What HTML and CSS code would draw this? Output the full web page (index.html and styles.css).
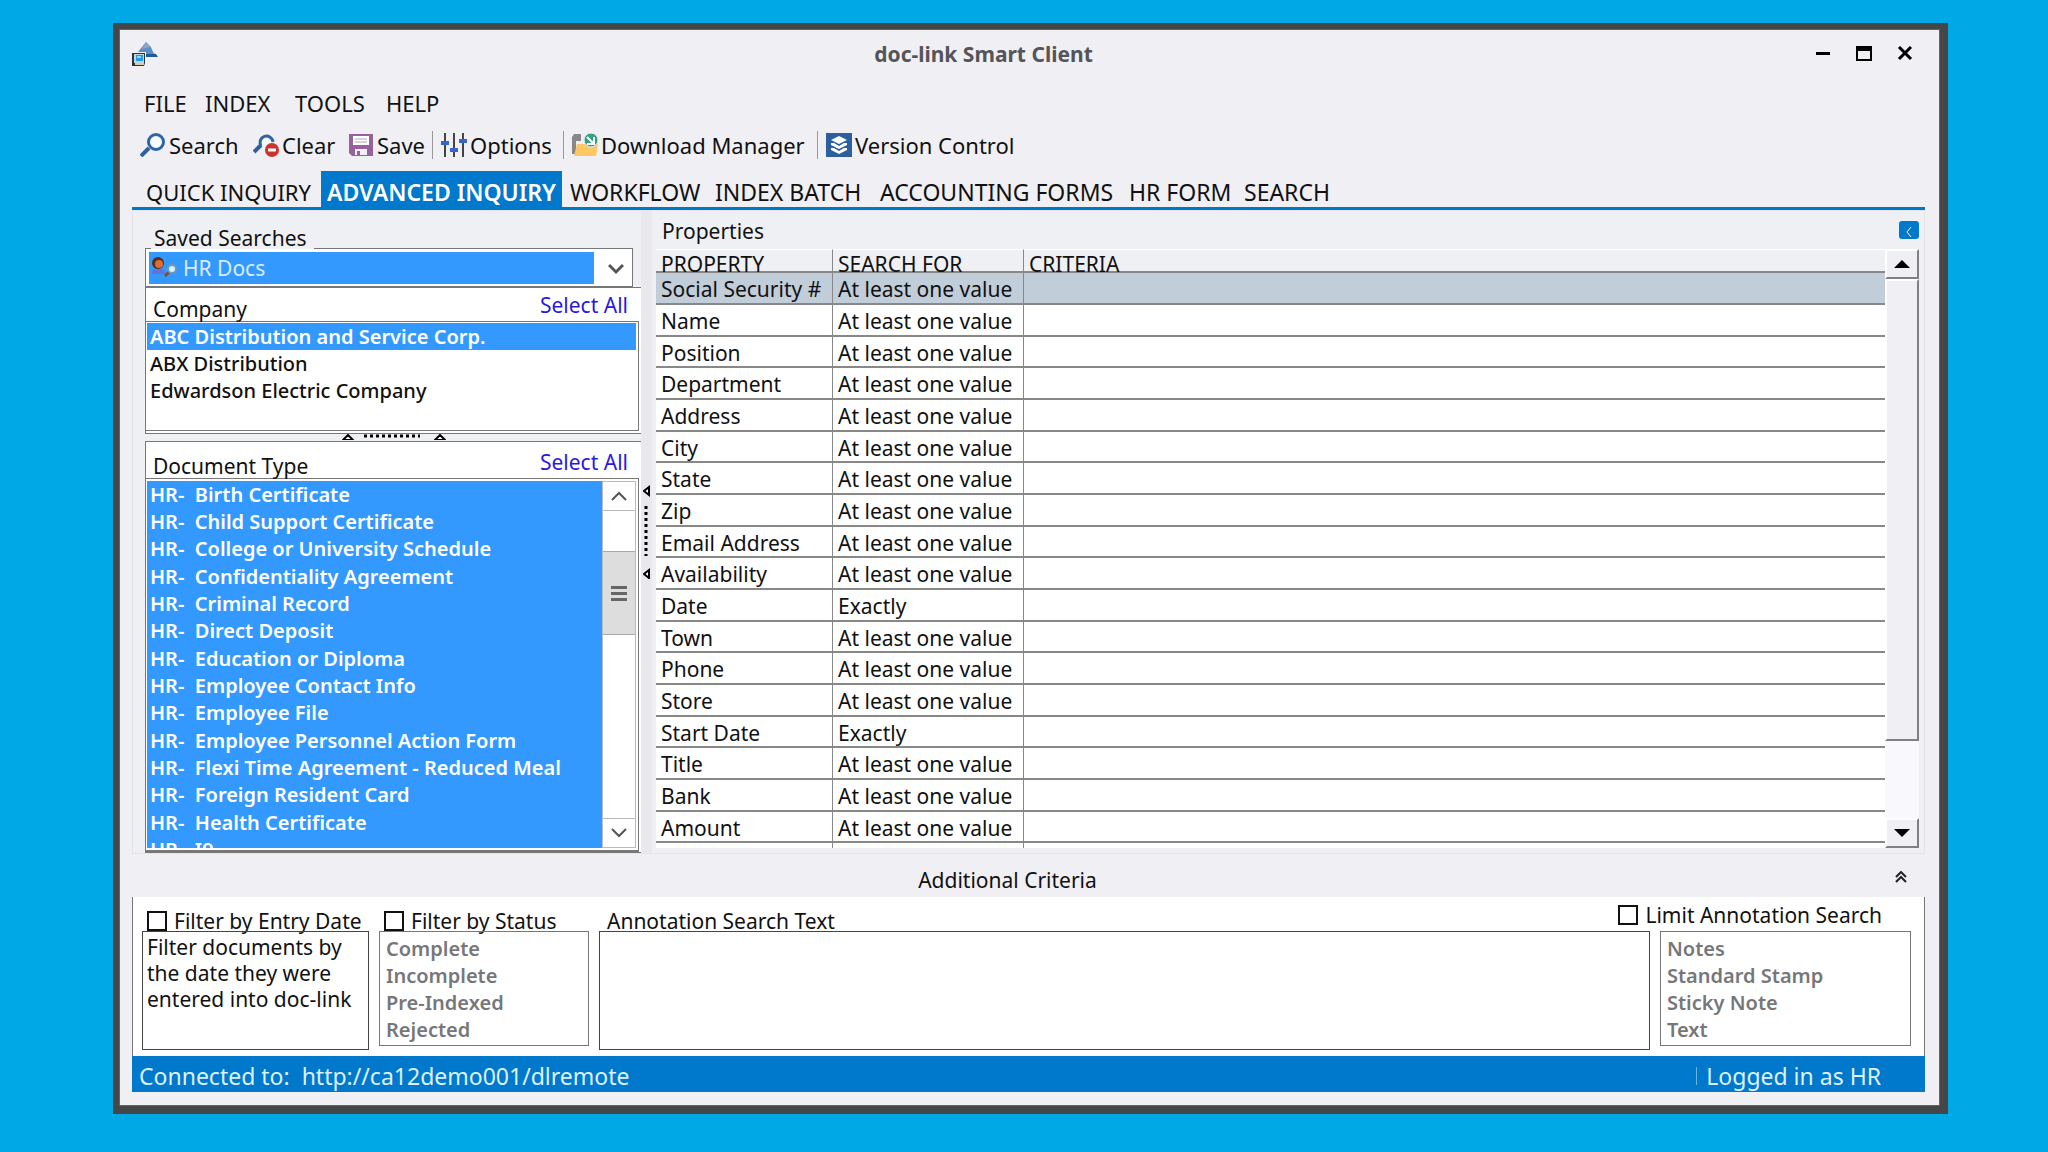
FILE: index.html
```html
<!DOCTYPE html>
<html lang="en">
<head>
<meta charset="utf-8">
<title>doc-link Smart Client</title>
<link rel="stylesheet" href="styles.css">
</head>
<body>
<div class="window">
  <header class="titlebar">
    <svg class="logo" viewBox="0 0 26 26" aria-hidden="true">
      <path d="M14 1L19 6L21 11L25 15H14V11H6L10 6Z" fill="#5f8fc4"/>
      <path d="M14 1L18 6L10 8Z" fill="#8da6c6"/>
      <path d="M14 13H24L26 16H14Z" fill="#1d5c97"/>
      <path d="M0 12H13V22L12 25H0Z" fill="#30343a"/>
      <rect x="2" y="13" width="10" height="9" fill="#c5d3dc"/>
      <rect x="4" y="14" width="7" height="6" fill="#1f9bea"/>
      <rect x="5" y="15" width="4" height="2" fill="#8fdcff"/>
      <rect x="3" y="22" width="9" height="2" fill="#d8cda0"/>
    </svg>
    <h1 class="title">doc-link Smart Client</h1>
    <div class="controls">
      <button aria-label="Minimize"><svg viewBox="0 0 16 16"><path d="M1 7.500H15" stroke="#000" stroke-width="3"/></svg></button>
      <button aria-label="Maximize"><svg viewBox="0 0 16 16"><path d="M1 1H15V14H1Z" fill="none" stroke="#000" stroke-width="2"/><path d="M0 0H16V5H0Z"/></svg></button>
      <button aria-label="Close"><svg viewBox="0 0 16 16"><path d="M2 1L14 13M14 1L2 13" stroke="#000" stroke-width="3"/></svg></button>
    </div>
  </header>

  <nav class="menu">
    <button class="m-file">FILE</button><button class="m-index">INDEX</button><button class="m-tools">TOOLS</button><button>HELP</button>
  </nav>

  <div class="toolbar">
    <button class="tool t-search"><svg viewBox="0 0 26 24"><path d="M1 23L9 15" stroke="#2e5f9f" stroke-width="4"/><circle cx="16" cy="9" r="7.500" fill="#f8fbfe" stroke="#2e63a6" stroke-width="3"/></svg>Search</button>
    <button class="tool t-clear"><svg viewBox="0 0 26 24"><path d="M1 19L8 12" stroke="#2e5f9f" stroke-width="4"/><path d="M8 13A6.500 6.500 0 1 1 20 9" fill="#f8fbfe" stroke="#2e63a6" stroke-width="3"/><circle cx="19" cy="17" r="7" fill="#c9352d"/><path d="M15 17H23" stroke="#fff" stroke-width="3"/></svg>Clear</button>
    <button class="tool t-save"><svg viewBox="0 0 26 24"><path d="M1 1H25V23H4L1 20Z" fill="#95639a"/><path d="M5 3H21V12H5Z" fill="#fff"/><path d="M7 6H19M7 9H19" stroke="#aaa"/><path d="M7 16H19V22H7Z" fill="#f3edf4"/><path d="M9 18H12V22H9Z" fill="#95639a"/></svg>Save</button>
    <span class="sep"></span>
    <button class="tool t-options"><svg viewBox="0 0 26 24"><path d="M4 0V24M13 0V24M22 0V24" stroke="#444" stroke-width="2"/><path d="M0 8H8V12H0ZM9 15H17V19H9ZM18 6H26V10H18Z" fill="#3764cf"/></svg>Options</button>
    <span class="sep"></span>
    <button class="tool t-download"><svg viewBox="0 0 26 24"><path d="M0 21V4L2 1H9V8H4V21Z" fill="#888"/><path d="M5 11H26L24 23H2Z" fill="#fdc863"/><circle cx="19" cy="7" r="7" fill="#35a07c" stroke="#eef" /><path d="M15 4L21 10M22 4V11H15" fill="none" stroke="#fff" stroke-width="2"/></svg>Download Manager</button>
    <span class="sep"></span>
    <button class="tool"><svg viewBox="0 0 26 24"><path d="M0 0H26V24H0Z" fill="#2c5f9e"/><path d="M13 3L21 7L13 11L5 7Z" fill="#fff"/><path d="M5 10L8 10L13 13L18 10L21 10V12L13 16L5 12ZM5 15L8 15L13 18L18 15L21 15V17L13 21L5 17Z" fill="#fff"/></svg>Version Control</button>
  </div>

  <nav class="tabs">
    <a href="#quick" class="tab w-quick">QUICK INQUIRY</a>
    <a href="#advanced" class="tab active" aria-current="page">ADVANCED INQUIRY</a>
    <a href="#workflow" class="tab w-workflow">WORKFLOW</a>
    <a href="#index" class="tab w-batch">INDEX BATCH</a>
    <a href="#accounting" class="tab w-accounting">ACCOUNTING FORMS</a>
    <a href="#hr" class="tab w-hr">HR FORM</a>
    <a href="#search" class="tab">SEARCH</a>
  </nav>

  <main class="work">
    <section class="side">
      <div class="saved">
        <label for="saved" class="saved-label">Saved Searches</label>
        <div class="combo">
          <svg class="person" viewBox="0 0 26 22" aria-hidden="true"><path d="M1 17Q1 11 7 11Q14 11 14 17Z" fill="#6572d8"/><circle cx="7" cy="6" r="6" fill="#5d2a1c"/><circle cx="8" cy="7" r="4" fill="#d9702f"/><path d="M14 19L18 15" stroke="#8b4a2c" stroke-width="3"/><circle cx="21" cy="12" r="4" fill="#d5f1ff" stroke="#7198b5" stroke-width="2"/></svg>
          <select id="saved"><option>HR Docs</option></select>
          <svg class="arrow" viewBox="0 0 16 12" aria-hidden="true"><path d="M1 2L8 9L15 2" fill="none" stroke="#555" stroke-width="3"/></svg>
        </div>
      </div>

      <div class="panel company">
        <div class="panel-head"><h2>Company</h2><a href="#all-companies">Select All</a></div>
        <ul class="list short">
          <li class="on">ABC Distribution and Service Corp.</li>
          <li>ABX Distribution</li>
          <li>Edwardson Electric Company</li>
        </ul>
      </div>

      <div class="hsplit">
        <svg viewBox="0 0 104 6" aria-hidden="true"><path d="M1 6L6 1L11 6ZM93 6L98 1L103 6Z" fill="#fff" stroke="#000" stroke-width="2"/><path d="M22 2H78" stroke="#000" stroke-width="3" stroke-dasharray="3 3"/></svg>
      </div>

      <div class="panel doctype">
        <div class="panel-head"><h2>Document Type</h2><a href="#all-types">Select All</a></div>
        <div class="list-box">
          <ul class="list long">
            <li>HR- &nbsp;Birth Certificate</li>
            <li>HR- &nbsp;Child Support Certificate</li>
            <li>HR- &nbsp;College or University Schedule</li>
            <li>HR- &nbsp;Confidentiality Agreement</li>
            <li>HR- &nbsp;Criminal Record</li>
            <li>HR- &nbsp;Direct Deposit</li>
            <li>HR- &nbsp;Education or Diploma</li>
            <li>HR- &nbsp;Employee Contact Info</li>
            <li>HR- &nbsp;Employee File</li>
            <li>HR- &nbsp;Employee Personnel Action Form</li>
            <li>HR- &nbsp;Flexi Time Agreement - Reduced Meal</li>
            <li>HR- &nbsp;Foreign Resident Card</li>
            <li>HR- &nbsp;Health Certificate</li>
            <li>HR- &nbsp;I9</li>
          </ul>
          <div class="flatbar">
            <button aria-label="Scroll up"><svg viewBox="0 0 16 12"><path d="M1 10L8 3L15 10" fill="none" stroke="#555" stroke-width="2"/></svg></button>
            <span class="gap-a"></span>
            <span class="thumb"></span>
            <span class="gap-b"></span>
            <button aria-label="Scroll down"><svg viewBox="0 0 16 12"><path d="M1 2L8 9L15 2" fill="none" stroke="#555" stroke-width="2"/></svg></button>
          </div>
        </div>
      </div>
    </section>

    <div class="vsplit">
      <svg viewBox="0 0 8 94" aria-hidden="true"><path d="M6 2V10L1 6ZM6 85V93L1 89Z" fill="#fff" stroke="#000" stroke-width="2"/><path d="M3 21V71" stroke="#000" stroke-width="3" stroke-dasharray="3 3"/></svg>
    </div>

    <section class="props">
      <div class="props-head">
        <h2>Properties</h2>
        <button class="collapse" aria-label="Collapse"><svg viewBox="0 0 20 18"><path d="M12 6L8 11L12 16" fill="none" stroke="#fff" stroke-width="1"/></svg></button>
      </div>
      <div class="grid">
        <div class="table-box">
          <table>
            <thead><tr><th class="c1">PROPERTY</th><th class="c2">SEARCH FOR</th><th>CRITERIA</th></tr></thead>
            <tbody>
              <tr class="on"><td>Social Security #</td><td>At least one value</td><td></td></tr>
              <tr><td>Name</td><td>At least one value</td><td></td></tr>
              <tr><td>Position</td><td>At least one value</td><td></td></tr>
              <tr><td>Department</td><td>At least one value</td><td></td></tr>
              <tr><td>Address</td><td>At least one value</td><td></td></tr>
              <tr><td>City</td><td>At least one value</td><td></td></tr>
              <tr><td>State</td><td>At least one value</td><td></td></tr>
              <tr><td>Zip</td><td>At least one value</td><td></td></tr>
              <tr><td>Email Address</td><td>At least one value</td><td></td></tr>
              <tr><td>Availability</td><td>At least one value</td><td></td></tr>
              <tr><td>Date</td><td>Exactly</td><td></td></tr>
              <tr><td>Town</td><td>At least one value</td><td></td></tr>
              <tr><td>Phone</td><td>At least one value</td><td></td></tr>
              <tr><td>Store</td><td>At least one value</td><td></td></tr>
              <tr><td>Start Date</td><td>Exactly</td><td></td></tr>
              <tr><td>Title</td><td>At least one value</td><td></td></tr>
              <tr><td>Bank</td><td>At least one value</td><td></td></tr>
              <tr><td>Amount</td><td>At least one value</td><td></td></tr>
            </tbody>
          </table>
          <div class="stub"><span class="c1"></span><span class="c2"></span></div>
        </div>
        <div class="bevelbar">
          <button aria-label="Scroll up"><svg viewBox="0 0 16 8"><path d="M0 8L8 0L16 8Z"/></svg></button>
          <span class="bevel-thumb"></span>
          <span class="bevel-gap"></span>
          <button aria-label="Scroll down"><svg viewBox="0 0 16 8"><path d="M0 0L8 8L16 0Z"/></svg></button>
        </div>
      </div>
    </section>
  </main>

  <div class="more">
    <h2>Additional Criteria</h2>
    <button aria-label="Toggle additional criteria"><svg viewBox="0 0 12 12"><path d="M1 6L6 1L11 6M1 11L6 6L11 11" fill="none" stroke="#222" stroke-width="2"/></svg></button>
  </div>

  <section class="criteria">
    <div class="col entry">
      <div class="check"><input type="checkbox" id="by-date"><label for="by-date">Filter by Entry Date</label></div>
      <p class="note">Filter documents by the date they were entered into doc-link</p>
    </div>
    <div class="col status">
      <div class="check"><input type="checkbox" id="by-status"><label for="by-status">Filter by Status</label></div>
      <ul class="list off"><li>Complete</li><li>Incomplete</li><li>Pre-Indexed</li><li>Rejected</li></ul>
    </div>
    <div class="col text">
      <div class="check"><label for="annotation">Annotation Search Text</label></div>
      <textarea id="annotation"></textarea>
    </div>
    <div class="col limit">
      <div class="check raised"><input type="checkbox" id="limit"><label for="limit">Limit Annotation Search</label></div>
      <ul class="list off"><li>Notes</li><li>Standard Stamp</li><li>Sticky Note</li><li>Text</li></ul>
    </div>
  </section>

  <footer class="statusbar"><span>Connected to: &nbsp;http://ca12demo001/dlremote</span><span class="user">Logged in as HR</span></footer>
</div>
</body>
</html>
```
FILE: styles.css
```css
* { box-sizing: border-box; }
body {
  margin: 0;
  padding: 23px 100px 39px 113px;
  min-height: 100vh;
  background: #00a8e6;
  font: 21px/28px "Noto Sans", sans-serif;
  color: #111;
}
h1, h2 { margin: 0; font-size: 21px; font-weight: 400; }
ul { margin: 0; padding: 0; list-style: none; }
svg { display: block; }
button { margin: 0; padding: 0; border: 0; background: none; color: inherit; font: inherit; }

.window {
  border: solid #444648;
  border-width: 6px 8px 8px 6px;
  box-shadow: inset 0 0 0 1px #0a7ccc;
  background: #f0eff4;
  padding: 0 15px 14px 13px;
}

/* title bar */
.titlebar { display: flex; align-items: center; height: 49px; }
.logo { width: 26px; height: 26px; }
.title { flex: 1; padding-right: 6px; text-align: center; font-weight: 700; color: #555559; }
.controls { display: flex; gap: 25px; padding-right: 12px; }
.controls button { width: 16px; height: 18px; }

/* menu and toolbar */
.menu { display: flex; height: 50px; padding-left: 12px; align-items: center; font-size: 22px; }
.menu button { text-align: left; }
.m-file { width: 61px; }
.m-index { width: 90px; }
.m-tools { width: 91px; }
.toolbar { display: flex; height: 34px; padding-left: 8px; align-items: center; font-size: 22px; }
.tool { display: flex; align-items: center; gap: 3px; white-space: nowrap; }
.tool svg { width: 26px; height: 24px; flex: none; }
.t-search { width: 113px; }
.t-clear { width: 95px; }
.t-save { width: 84px; }
.t-options { width: 122px; }
.t-download { width: 245px; }
.sep { width: 1px; height: 28px; background: #999; }
.sep + .tool { margin-left: 8px; }

/* tabs */
.tabs { display: flex; height: 48px; padding: 9px 0 0 14px; border-bottom: 3px solid #0078c8; font-size: 23px; line-height: 30px; white-space: nowrap; }
.tab { padding-top: 6px; color: #111; text-decoration: none; }
.tab.active { width: 241px; margin-right: 8px; text-align: center; background: #0078cc; color: #fff; font-weight: 600; }
.w-quick { width: 175px; font-size: 22px; }
.w-workflow { width: 145px; }
.w-batch { width: 165px; }
.w-accounting { width: 249px; }
.w-hr { width: 115px; }

/* work area */
.work { display: flex; height: 644px; background: #eff0f3; border: 1px solid #e4e5e9; }
.side { width: 508px; padding: 20px 0 2px 12px; display: flex; flex-direction: column; }
.side > * { flex: none; }
.saved { width: 488px; }
.saved-label {
  position: relative; z-index: 1; display: block; width: 163px; height: 18px;
  margin: 0 0 -1px 6px; padding-left: 3px; line-height: 14px; background: #eff0f3;
}
.combo { display: flex; align-items: center; position: relative; height: 39px; border: 1px solid #777; background: #fff; }
select {
  appearance: none; flex: 1; height: 32px; margin: 0 38px 0 3px; padding: 0 0 0 34px;
  border: 0; border-radius: 0; background: #3399ff; color: #d9ecff; font: inherit; line-height: 30px;
}
.person { position: absolute; left: 5px; top: 8px; width: 26px; height: 22px; }
.arrow { position: absolute; right: 8px; top: 14px; width: 16px; height: 12px; }
.panel { border: 1px solid #777; background: #fff; width: 498px; }
.panel-head { display: flex; justify-content: space-between; height: 33px; padding: 3px 14px 0 7px; }
.panel-head h2 { padding-top: 4px; }
.panel-head a { color: #2a18e0; text-decoration: none; }
.company { height: 147px; }
.doctype .panel-head { height: 36px; padding-top: 6px; }
.list { font-size: 20px; font-weight: 600; display: grid; grid-auto-rows: 27px; line-height: 27px; white-space: nowrap; }
.list li { padding-left: 3px; }
.short { height: 110px; width: 493px; border: 1px solid #777; border-left: 0; padding: 1px; font-weight: 500; }
.list .on { background: #3399ff; color: #fff; font-weight: 600; margin-right: 1px; }
.hsplit { height: 7px; padding-left: 197px; }
.hsplit svg { width: 104px; height: 6px; }
.doctype { height: 412px; }
.list-box { display: flex; width: 493px; height: 374px; border: 1px solid #777; border-left: 0; border-bottom-width: 2px; padding: 2px 2px 2px 1px; }
.long { flex: 1; height: 100%; overflow: hidden; background: #3399ff; color: #fff; align-content: start; grid-auto-rows: auto; }
.long li { height: 27px; }
.long li:nth-child(3n) { height: 28px; }
.flatbar { width: 34px; display: flex; flex-direction: column; border: 1px solid #bbb; background: #fff; }
.flatbar button { height: 29px; display: grid; place-items: center; }
.flatbar button:first-child { border-bottom: 1px solid #bbb; }
.flatbar button:last-child { border-top: 1px solid #bbb; }
.flatbar svg { width: 16px; height: 12px; }
.gap-a { height: 40px; }
.gap-b { flex: 1; }
.thumb { height: 84px; border: solid #aaa; border-width: 1px 0; background: linear-gradient(#666 0 3px, #ddd 3px 6px, #666 6px 9px, #ddd 9px 12px, #666 12px 15px) center / 16px 15px no-repeat #ddd; }
.vsplit { width: 11px; padding: 274px 0 0 2px; background: #e9e9ed; }
.vsplit svg { width: 8px; height: 94px; }

/* property table */
.props { flex: 1; padding: 0 5px 5px 4px; min-width: 0; display: flex; flex-direction: column; }
.props-head { flex: none; display: flex; justify-content: space-between; height: 38px; padding: 6px 0 0 6px; }
.collapse { width: 20px; height: 18px; margin-top: 4px; border-radius: 3px; background: #0078cc; }
.grid { display: flex; flex: 1; }
.table-box { flex: 1; background: #fff; }
table { width: 100%; border-collapse: separate; border-spacing: 0; table-layout: fixed; line-height: 24px; }
th { height: 24px; padding: 8px 0 0 5px; border-top: 1px solid #fff; border-bottom: 2px solid #888; background: #eff0f3; text-align: left; font-weight: 400; line-height: 13px; }
td { height: 32px; padding: 2px 0 0 5px; border-bottom: 2px solid #888; white-space: nowrap; }
tbody tr:nth-child(3n) td { height: 31px; }
th.c1 { width: 177px; }
th.c2 { width: 191px; }
th:not(:last-child), td:not(:last-child) { border-right: 1px solid #888; }
tr.on td { background: #c1cdd9; }
.stub { display: flex; height: 5px; }
.stub span { border-right: 1px solid #888; }
.stub .c1 { width: 177px; }
.stub .c2 { width: 191px; }
.bevelbar { width: 34px; display: flex; flex-direction: column; background: #f9f8fc; }
.bevelbar button, .bevel-thumb { border: solid; border-width: 2px; border-color: #fff #808080 #808080 #fff; background: #f0eff3; }
.bevelbar button { height: 30px; display: grid; place-items: center; }
.bevelbar svg { width: 16px; height: 8px; }
.bevel-thumb { flex: 461; }
.bevel-gap { flex: 77; }

/* additional criteria */
.more { display: flex; align-items: center; height: 43px; padding-right: 18px; }
.more h2 { flex: 1; padding: 8px 12px 0 0; text-align: center; }
.more button { padding-top: 3px; }
.more svg { width: 12px; height: 12px; }
.criteria { display: flex; gap: 10px; height: 159px; padding: 14px 13px 6px 9px; border: solid #777; border-width: 0 1px; background: #fff; }
.col { display: flex; flex-direction: column; }
.entry { width: 227px; }
.status { width: 210px; }
.text { flex: 1; }
.limit { width: 251px; }
.check { display: flex; align-items: center; height: 20px; gap: 7px; padding-left: 5px; line-height: 20px; white-space: nowrap; }
.text .check { padding-left: 8px; }
.raised { justify-content: flex-end; padding-right: 29px; margin: -6px 0 6px; }
input[type="checkbox"] { appearance: none; width: 20px; height: 20px; margin: 0; border: 2px solid #111; border-radius: 0; background: #fff; flex: none; }
.note { flex: 1; margin: 0; padding: 2px 4px; border: 1px solid #444; line-height: 26px; }
textarea { flex: 1; border: 1px solid #444; border-radius: 0; resize: none; font: inherit; margin: 0; background: #fff; }
.off { height: 115px; border: 1px solid #777; padding: 3px 3px 0; color: #77777a; }
.statusbar { display: flex; justify-content: space-between; height: 36px; padding: 0 44px 0 7px; background: #0078cc; color: #dff1fd; font-size: 23px; line-height: 40px; white-space: nowrap; }
.user { height: 18px; margin-top: 11px; padding-left: 9px; border-left: 1px solid #6db4e4; line-height: 18px; }
```
